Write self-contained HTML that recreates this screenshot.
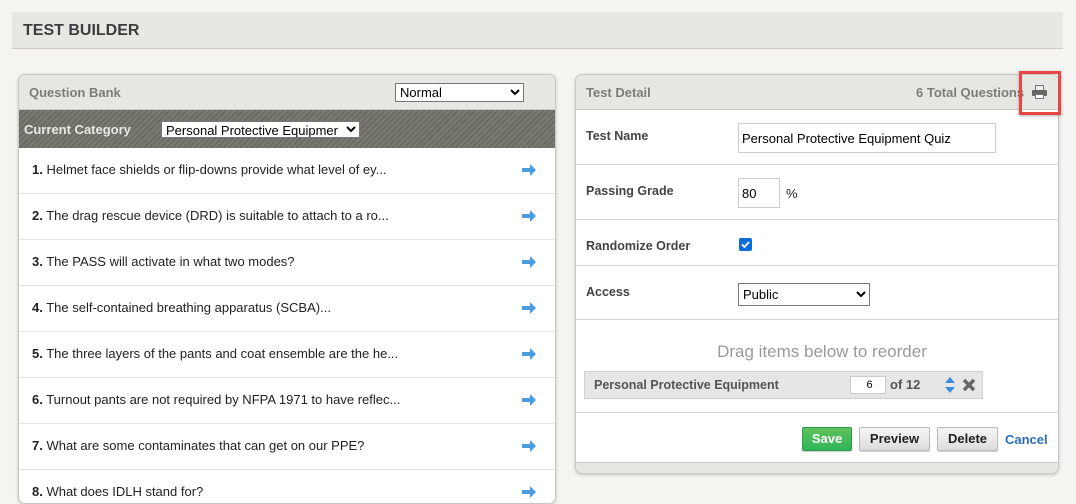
<!DOCTYPE html>
<html><head><style>
*{box-sizing:border-box;margin:0;padding:0}
body{width:1076px;height:492px;overflow:hidden;background:#f5f4f0;font-family:"Liberation Sans",sans-serif;font-size:13px;color:#222;position:relative}
.top{position:absolute;left:12px;top:12px;width:1051px;height:37px;background:#e8e7e1;border-bottom:1px solid #cfcdc6}
.top h1{font-size:16px;font-weight:bold;color:#3d3d3d;position:absolute;left:11px;top:10px}
.panel{position:absolute;background:#fff;border:1px solid #c8c8c4;border-radius:7px;box-shadow:0 1px 3px rgba(0,0,0,.2);overflow:hidden}
.ph{height:35px;background:#e6e6e2;border-bottom:1px solid #c9c9c5;position:relative;font-weight:bold;color:#7d7d78}
.ph span{position:absolute;top:10px;left:10px}
select{font-family:"Liberation Sans",sans-serif;font-size:13px;background:#fff;border:1px solid #767676;position:absolute}
.cat{height:38px;background:repeating-linear-gradient(135deg,#7a7a72 0 2px,#6c6c64 2px 4px);position:relative}
.cat b{position:absolute;left:5px;top:12px;color:#e8e8e4}
.row{height:46px;border-bottom:1px solid #e4e4e4;position:relative}
.row span{position:absolute;left:13px;top:14px}
.arr{position:absolute;right:18px;top:16px;width:16px;height:12px}
.fr{position:absolute;left:0;width:482px;border-bottom:1px solid #d2d2d2}
.fr b{position:absolute;left:10px;color:#444;font-size:12.5px}
input{font-family:"Liberation Sans",sans-serif;font-size:13px;border:1px solid #ccc;position:absolute;padding-left:3px;background:#fff}
.btn{position:absolute;top:352px;height:24px;border:1px solid #bbb;border-radius:2px;background:linear-gradient(#f6f6f6,#dcdcdc);font-weight:bold;font-size:13px;text-align:center;line-height:22px;color:#222;box-shadow:0 1px 1px rgba(0,0,0,.2)}
</style></head><body>
<div class="top"><h1>TEST BUILDER</h1></div>

<div class="panel" style="left:18px;top:74px;width:538px;height:430px">
 <div class="ph"><span>Question Bank</span>
  <select style="left:376px;top:8px;width:129px;height:19px"><option>Normal</option></select></div>
 <div class="cat"><b>Current Category</b>
  <select style="left:142px;top:11px;width:199px;height:17px;font-size:13px"><option>Personal Protective Equipmer</option></select></div>
 <div class="row"><span><b>1.</b> Helmet face shields or flip-downs provide what level of ey...</span><svg class="arr" viewBox="0 0 16 12"><path d="M1 4h8V0l6 6-6 6V8H1z" fill="#4a9be0"/></svg></div>
 <div class="row"><span><b>2.</b> The drag rescue device (DRD) is suitable to attach to a ro...</span><svg class="arr" viewBox="0 0 16 12"><path d="M1 4h8V0l6 6-6 6V8H1z" fill="#4a9be0"/></svg></div>
 <div class="row"><span><b>3.</b> The PASS will activate in what two modes?</span><svg class="arr" viewBox="0 0 16 12"><path d="M1 4h8V0l6 6-6 6V8H1z" fill="#4a9be0"/></svg></div>
 <div class="row"><span><b>4.</b> The self-contained breathing apparatus (SCBA)...</span><svg class="arr" viewBox="0 0 16 12"><path d="M1 4h8V0l6 6-6 6V8H1z" fill="#4a9be0"/></svg></div>
 <div class="row"><span><b>5.</b> The three layers of the pants and coat ensemble are the he...</span><svg class="arr" viewBox="0 0 16 12"><path d="M1 4h8V0l6 6-6 6V8H1z" fill="#4a9be0"/></svg></div>
 <div class="row"><span><b>6.</b> Turnout pants are not required by NFPA 1971 to have reflec...</span><svg class="arr" viewBox="0 0 16 12"><path d="M1 4h8V0l6 6-6 6V8H1z" fill="#4a9be0"/></svg></div>
 <div class="row"><span><b>7.</b> What are some contaminates that can get on our PPE?</span><svg class="arr" viewBox="0 0 16 12"><path d="M1 4h8V0l6 6-6 6V8H1z" fill="#4a9be0"/></svg></div>
 <div class="row"><span><b>8.</b> What does IDLH stand for?</span><svg class="arr" viewBox="0 0 16 12"><path d="M1 4h8V0l6 6-6 6V8H1z" fill="#4a9be0"/></svg></div>
</div>

<div class="panel" style="left:575px;top:74px;width:484px;height:400px;background:#e6e6e2">
 <div style="position:absolute;left:0;top:0;width:482px;height:388px;background:#fff;border-bottom:1px solid #c9c9c5"></div>
 <div class="ph" style="position:absolute;left:0;top:0;width:482px"><span>Test Detail</span><span style="left:340px">6 Total Questions</span></div>
 <div class="fr" style="top:35px;height:55px"><b style="top:19px">Test Name</b><input style="left:162px;top:13px;width:258px;height:30px" value="Personal Protective Equipment Quiz"></div>
 <div class="fr" style="top:90px;height:55px"><b style="top:19px">Passing Grade</b><input style="left:162px;top:13px;width:42px;height:30px" value="80"><span style="position:absolute;left:210px;top:21px">%</span></div>
 <div class="fr" style="top:145px;height:46px"><b style="top:19px">Randomize Order</b><div style="position:absolute;left:163px;top:18px;width:13px;height:13px;background:#0b6dd9;border-radius:2px"><svg viewBox="0 0 13 13" width="13" height="13"><path d="M3 6.5l2.5 2.5 4.5-5" stroke="#fff" stroke-width="1.8" fill="none"/></svg></div></div>
 <div class="fr" style="top:191px;height:54px"><b style="top:19px">Access</b><select style="left:162px;top:17px;width:132px;height:23px"><option>Public</option></select></div>
 <div class="fr" style="top:245px;height:93px">
  <div style="position:absolute;left:0;width:482px;top:22px;text-align:center;color:#999;font-size:17px;padding-left:10px">Drag items below to reorder</div>
  <div style="position:absolute;left:8px;top:51px;width:399px;height:28px;background:#e6e6e6;border:1px solid #d0d0d0">
   <b style="position:absolute;left:9px;top:6px;color:#555;font-size:12.5px">Personal Protective Equipment</b>
   <input style="left:265px;top:4px;width:36px;height:18px;font-size:11px;text-align:center" value="6">
   <b style="position:absolute;left:305px;top:5px;color:#555;font-size:13px">of 12</b>
   <svg style="position:absolute;left:359px;top:5px" width="12" height="16" viewBox="0 0 12 16"><path d="M6 0l5 6H1zM6 16l5-6H1z" fill="#3a8ee0"/></svg>
   <svg style="position:absolute;left:377px;top:6px" width="14" height="14" viewBox="0 0 14 14"><path d="M2 2l10 10M12 2L2 12" stroke="#666" stroke-width="3.5"/></svg>
  </div>
 </div>
 <div class="btn" style="left:226px;width:50px;background:linear-gradient(#5fc05a,#2fb55a);border-color:#2e9d4a;color:#fff">Save</div>
 <div class="btn" style="left:283px;width:71px">Preview</div>
 <div class="btn" style="left:361px;width:61px">Delete</div>
 <div style="position:absolute;left:429px;top:357px;color:#2a6ebb;font-weight:bold">Cancel</div>
</div>

<div style="position:absolute;left:1019px;top:71px;width:42px;height:44px;border:3px solid #e84545;box-shadow:0 1px 3px rgba(0,0,0,.3)"></div>
<svg style="position:absolute;left:1031px;top:84px" width="17" height="16" viewBox="0 0 17 16"><rect x="4.5" y="1.5" width="8" height="5" fill="#eee" stroke="#777"/><rect x="1" y="6" width="15" height="6" rx="1" fill="#666"/><rect x="4.5" y="10.5" width="8" height="4" fill="#fff" stroke="#777"/></svg>
</body></html>
